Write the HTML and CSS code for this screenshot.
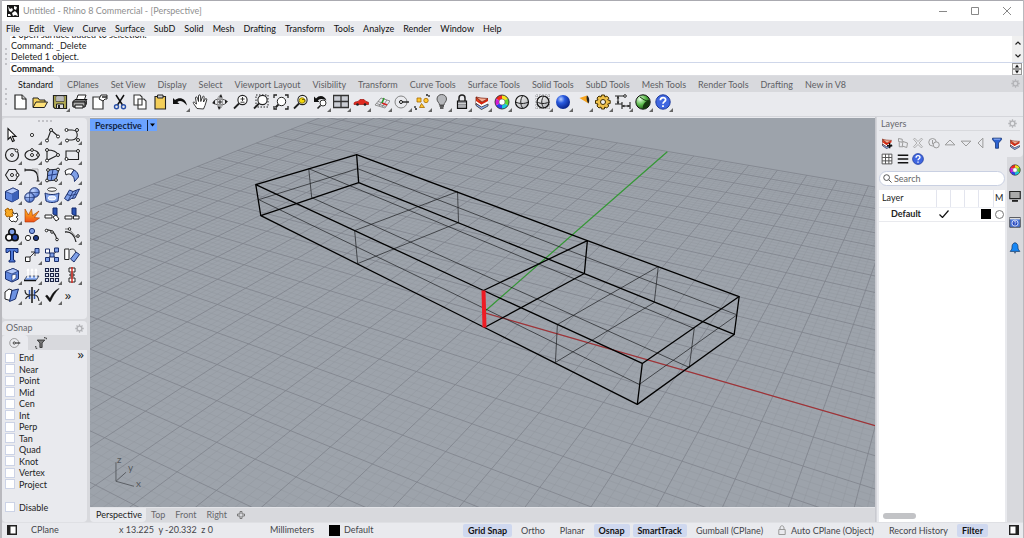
FILE: index.html
```html
<!DOCTYPE html>
<html lang="en">
<head>
<meta charset="utf-8">
<title>Untitled - Rhino 8 Commercial - [Perspective]</title>
<link rel="stylesheet" href="styles.css">
</head>
<body>
<svg class="defs" aria-hidden="true">
  <defs>
    <radialGradient id="blueBall" cx=".35" cy=".3" r=".8"><stop offset="0" stop-color="#b9d0ff"/><stop offset=".35" stop-color="#2a5be0"/><stop offset="1" stop-color="#031a7a"/></radialGradient>
    <radialGradient id="softBall" cx=".35" cy=".3" r=".8"><stop offset="0" stop-color="#c3d6ff"/><stop offset="1" stop-color="#4169c8"/></radialGradient>
    <radialGradient id="greenBall" cx=".3" cy=".3" r=".8"><stop offset="0" stop-color="#e9ffe5"/><stop offset=".5" stop-color="#58b848"/><stop offset="1" stop-color="#0d3c0a"/></radialGradient>
    <linearGradient id="whiteBall" x1="0" x2="1" y1="0" y2="1"><stop offset="0" stop-color="#fff"/><stop offset="1" stop-color="#a9abb0"/></linearGradient>
    <linearGradient id="fire" x1="0" x2="0" y1="0" y2="1"><stop offset="0" stop-color="#ffc21c"/><stop offset="1" stop-color="#f0501a"/></linearGradient>
    <symbol id="gear" viewBox="0 0 10 10"><circle cx="5" cy="5" r="2.6" fill="none" stroke="currentColor" stroke-width="1.5"/><path d="M5 .3v1.9M5 7.8v1.9M.3 5h1.9M7.8 5h1.9M1.7 1.7l1.3 1.3M7 7l1.3 1.3M1.7 8.3L3 7M7 3l1.3-1.3" stroke="currentColor" stroke-width="1.4"/></symbol>
    <symbol id="help" viewBox="0 0 16 16"><circle cx="8" cy="8" r="7.2" fill="#3f66e0" stroke="#1d3a9c"/><path d="M5.400 6.200c0-3.600 5.400-3.400 5.200-.3C10.500 7.600 8 7.700 8 9.800M8 11.200v1.700" fill="none" stroke="#fff" stroke-width="1.800"/></symbol>
    <symbol id="layers" viewBox="0 0 16 16"><path d="M2 3v8l5.500 4V8z" fill="#e8401e" stroke="#5a1408" stroke-width=".7"/><path d="M2 7v2l5.500 4 6.500-3V7.500L7.500 10.500z" fill="#fff"/><path d="M2 9.500v2l5.500 4 6.500-3.500v-2L7.500 13z" fill="#8fb0f5" stroke="#333" stroke-width=".8"/><path d="M2 6.500l5.500 4L14 7V4.500L8 8z" fill="#d8250e"/><path d="M2 3l5 1 7 .5L8 8z" fill="#f9b195" stroke="#7a1a0a" stroke-width=".7"/></symbol>
    <symbol id="wheel" viewBox="0 0 16 16"><g fill="none" stroke-width="4"><path d="M8 3A5 5 0 0 1 12.300 5.500" stroke="#f7e11b"/><path d="M12.300 5.500A5 5 0 0 1 12.300 10.500" stroke="#5fd62e"/><path d="M12.300 10.500A5 5 0 0 1 8 13" stroke="#18c8d8"/><path d="M8 13A5 5 0 0 1 3.700 10.500" stroke="#2b3ef0"/><path d="M3.700 10.500A5 5 0 0 1 3.700 5.500" stroke="#d21bd6"/><path d="M3.700 5.500A5 5 0 0 1 8 3" stroke="#f2261b"/></g><circle cx="8" cy="8" r="7" fill="none" stroke="#333" stroke-width=".9"/><circle cx="8" cy="8" r="3" fill="#fff" stroke="#555" stroke-width=".6"/></symbol>
    <symbol id="snap" viewBox="0 0 16 16"><circle cx="7" cy="8" r="6" fill="none" stroke="#777" stroke-width=".9"/><circle cx="7" cy="8" r="1.500" fill="#fff" stroke="#111"/><path d="M8.500 8H15" stroke="#111" stroke-width="1.300"/></symbol>
    <symbol id="lens" viewBox="0 0 16 16"><circle cx="9.500" cy="6" r="4.600" fill="#fff" stroke="#222" stroke-width="1.100"/><path d="M6 9.500L1 14.500" stroke="#222" stroke-width="1.800"/></symbol>
    <symbol id="page" viewBox="0 0 16 16"><path d="M3 1h7l4 4v10H3z" fill="#fff" stroke="#222" stroke-width="1.200"/><path d="M10 1v4h4" fill="#ccc" stroke="#222"/></symbol>
  </defs>
</svg>

<div class="window">
  <header class="titlebar">
    <svg class="logo" viewBox="0 0 12 12"><rect width="12" height="12" fill="#161616"/><path d="M1 1l2 3 2-1 1 2-2 2-2-1zM7 1l3 1-1 3-2-1zM5 8l3-2 2 2 1 3-3-1-2 1zM1 9l2 0 1 2-3 0z" fill="#fff"/></svg>
    <h1>Untitled - Rhino 8 Commercial - [Perspective]</h1>
    <div class="winbtns">
      <button aria-label="Minimize"><svg viewBox="0 0 8 8"><path d="M0 4.500h8" /></svg></button>
      <button aria-label="Maximize"><svg viewBox="0 0 8 8"><path d="M.5.500h7v7h-7z"/></svg></button>
      <button aria-label="Close"><svg viewBox="0 0 8 8"><path d="M0 0l8 8M8 0L0 8"/></svg></button>
    </div>
  </header>

  <nav class="menu">
    <button>File</button><button>Edit</button><button>View</button><button>Curve</button><button>Surface</button><button>SubD</button><button>Solid</button><button>Mesh</button><button>Drafting</button><button>Transform</button><button>Tools</button><button>Analyze</button><button>Render</button><button>Window</button><button>Help</button>
  </nav>

  <section class="command">
    <div class="grip"><i></i><i></i><i></i><i></i></div>
    <div class="console">
      <div class="history">
        <div class="lines"><p>1 open surface added to selection.</p><p>Command: _Delete</p><p>Deleted 1 object.</p></div>
        <div class="scroll"><svg viewBox="0 0 6 4"><path d="M.5 3.500L3 1l2.500 2.500"/></svg><svg viewBox="0 0 6 4"><path d="M.5.500L3 3 5.500.500"/></svg></div>
      </div>
      <div class="prompt"><label for="cmd">Command:</label><input id="cmd" type="text">
        <div class="spin"><button aria-label="Previous"><svg viewBox="0 0 6 4"><path d="M1 3.500L3 .5l2 3z"/></svg></button><button aria-label="Next"><svg viewBox="0 0 6 4"><path d="M1 .5l2 3 2-3z"/></svg></button></div>
      </div>
    </div>
  </section>

  <section class="ribbon">
    <div class="grip"><i></i><i></i><i></i><i></i></div>
    <div class="ribbon-body">
      <div class="tabs" role="tablist">
        <button class="on">Standard</button><button>CPlanes</button><button>Set View</button><button>Display</button><button>Select</button><button>Viewport Layout</button><button>Visibility</button><button>Transform</button><button>Curve Tools</button><button>Surface Tools</button><button>Solid Tools</button><button>SubD Tools</button><button>Mesh Tools</button><button>Render Tools</button><button>Drafting</button><button>New in V8</button>
        <svg class="gear"><use href="#gear"/></svg>
      </div>
      <div class="tools">
        <button aria-label="New"><svg viewBox="0 0 16 16"><use href="#page"/></svg></button>
        <button aria-label="Open"><svg viewBox="0 0 16 16"><path d="M1 13V4h5l1.500 2H13v3" fill="#f7d560" stroke="#222"/><path d="M1 13.500L4 8h11.500l-3 5.500z" fill="#ffe27a" stroke="#222"/></svg></button>
        <button aria-label="Save" class="fly"><svg viewBox="0 0 16 16"><path d="M1.500 1.500h13v13H3l-1.500-1.500z" fill="#b5ae55" stroke="#222" stroke-width="1.200"/><path d="M4 2h8v5.500H4z" fill="#eee" stroke="#333" stroke-width=".7"/><path d="M5 4h6M5 6h6" stroke="#888"/><path d="M4.500 10h7v4.500h-7z" fill="#ddd" stroke="#222"/><path d="M6 11h2v3H6z" fill="#222"/></svg></button>
        <button aria-label="Print"><svg viewBox="0 0 16 16"><path d="M4 7l2-6h8l-2 6" fill="#fff" stroke="#222"/><path d="M1 7.500l2-2h12l-2 2v5H1z" fill="#777" stroke="#111"/><path d="M1 8h12v5H1z" fill="#aaa" stroke="#111"/><path d="M3 11h8v3H3z" fill="#eee" stroke="#111"/><path d="M13 8l2-2v4l-2 3z" fill="#333"/></svg></button>
        <button aria-label="Document properties"><svg viewBox="0 0 16 16"><path d="M1 3h7l3 3v9H1z" fill="#fff" stroke="#333" stroke-width="1.200"/><path d="M7 5l2-4h6v4h-2l-2 2z" fill="#fff" stroke="#222"/><path d="M10 3h5" stroke="#222" stroke-width="1.500"/></svg></button>
        <button aria-label="Cut"><svg viewBox="0 0 16 16"><path d="M4 1l6.500 10M12 1L5.500 11" stroke="#111" stroke-width="1.500"/><circle cx="4.500" cy="12.800" r="2" fill="none" stroke="#2950a8" stroke-width="1.400"/><circle cx="11.500" cy="12.800" r="2" fill="none" stroke="#2950a8" stroke-width="1.400"/></svg></button>
        <button aria-label="Copy"><svg viewBox="0 0 16 16"><path d="M2 1h6l2 2v8H2zM6 5h6l2 2v8H6z" fill="#fff" stroke="#333" stroke-width="1.100"/></svg></button>
        <button aria-label="Paste"><svg viewBox="0 0 16 16"><path d="M3 2.500h10.500v12.500H3z" fill="#f4cf5a" stroke="#222" stroke-width="1.100"/><path d="M5.500 1h5.500v3H5.500z" fill="#ccc" stroke="#222"/></svg></button>
        <button aria-label="Undo" class="fly"><svg viewBox="0 0 16 16"><path d="M1 4v6h6.500L5.300 8C8 6 11 7 15 11.500 13.500 4.500 8 2.500 3 6z" fill="#111"/></svg></button>
        <button aria-label="Pan"><svg viewBox="0 0 16 16"><path d="M5 14.500L1.500 9.500c-1-2 1-2 2 0L4.500 10 3.500 4c0-1.500 1.500-1.500 2 0L6.500 7.500 6.500 2c0-1.500 2-1.500 2 0l.3 5.500L10.500 3c.4-1.200 2-1 1.700.3L11.500 8l1.700-3c.7-1 2-.4 1.500 1L13 11.500l-1.500 3.500z" fill="#fff" stroke="#222" stroke-width=".9"/></svg></button>
        <button aria-label="Rotate view"><svg viewBox="0 0 16 16"><ellipse cx="8" cy="8" rx="6.500" ry="3" fill="none" stroke="#333" stroke-width=".8"/><ellipse cx="8" cy="8" rx="2.500" ry="6.500" fill="none" stroke="#888" stroke-width=".8"/><path d="M9 0l1.500 3.500H7zM7 16l2-3.500H5.500zM0 9l3-2.500v4zM16 7.500l-3-2v4z" fill="#222"/><path d="M8 6v4M6 8h4" stroke="#222"/></svg></button>
        <button aria-label="Zoom dynamic" class="step"><svg viewBox="0 0 16 16"><use href="#lens"/><path d="M7.500 5h4M9.500 3v4M7.500 8.200h4" stroke="#222" stroke-width=".9"/></svg></button>
        <button aria-label="Zoom window"><svg viewBox="0 0 16 16"><use href="#lens"/><path d="M3 1h12v12H3z" fill="none" stroke="#222" stroke-dasharray="1.500 1.500"/></svg></button>
        <button aria-label="Zoom extents"><svg viewBox="0 0 16 16"><circle cx="8.500" cy="7.500" r="4.200" fill="#fff" stroke="#222"/><path d="M5.500 10.500L2.500 13.500" stroke="#222" stroke-width="1.800"/><path d="M1 4V1h3M12 1h3v3M15 12v3h-3M1 12v3h3" fill="none" stroke="#222" stroke-width="1.300"/></svg></button>
        <button aria-label="Zoom selected"><svg viewBox="0 0 16 16"><use href="#lens"/><circle cx="9" cy="6.500" r="2.800" fill="#f5d90a" stroke="#7c6b00" stroke-width=".8"/><path d="M9 5.500h3v3" fill="none" stroke="#7c6b00"/></svg></button>
        <button aria-label="Undo view" class="fly"><svg viewBox="0 0 16 16"><path d="M1 2.500V8h5.500L4.800 6.200C7.500 4.500 10 4.500 13.500 6.500 11.500 1.500 6.500.5 3 4.500z" fill="#111"/><circle cx="10" cy="9" r="3" fill="#fff" stroke="#333"/><path d="M7.500 11.500l-3 3" stroke="#222" stroke-width="1.600"/></svg></button>
        <button aria-label="Viewports" class="fly"><svg viewBox="0 0 16 16"><path d="M.5 1.500h15v12H.500z" fill="#c9ccd3" stroke="#333" stroke-width="1.300"/><path d="M8 1.500v12M.5 7.500h15" stroke="#333" stroke-width="1.300"/></svg></button>
        <button aria-label="Car view" class="fly"><svg viewBox="0 0 16 16"><path d="M1 9.500c0-1.500 2-1.800 4-2l2-2h4l2 2 2.500.8V10.500H1z" fill="#e02a20" stroke="#a01510" stroke-width=".7"/><circle cx="4.500" cy="10.500" r="1.300" fill="#222"/><circle cx="12" cy="10.500" r="1.300" fill="#222"/></svg></button>
        <button aria-label="Set CPlane" class="fly step"><svg viewBox="0 0 16 16"><path d="M1 11L7 4l9 3-5 7zM4 7.500l9 3M2.500 9.500l9 3M10 5l-5 7M13 6l-5 7" fill="none" stroke="#777" stroke-width=".8"/><path d="M8 9l5 2" stroke="#d22" stroke-width="1.500"/><path d="M8 9l2-5" stroke="#2a9a2a" stroke-width="1.500"/></svg></button>
        <button aria-label="Object snap" class="fly"><svg viewBox="0 0 16 16"><use href="#snap"/></svg></button>
        <button aria-label="Select" class="fly"><svg viewBox="0 0 16 16"><path d="M3 4h4v4H3z" fill="#ffc62e" stroke="#a66a00" stroke-width=".8"/><circle cx="12" cy="6.500" r="2.200" fill="#ffc62e" stroke="#a66a00" stroke-width=".8"/><path d="M7.500 9.500l3 4h-5z" fill="#ffc62e" stroke="#a66a00" stroke-width=".8"/><path d="M12 1h3v3M1 12v3h3" fill="none" stroke="#222" stroke-width="1.300" stroke-dasharray="2 1"/></svg></button>
        <button aria-label="Hide" class="fly"><svg viewBox="0 0 16 16"><path d="M5.500 11C5.500 8.500 3 8 3 5c0-6 9.500-6 9.500 0 0 3-2.500 3.500-2.500 6z" fill="#b5b7bb" stroke="#555"/><path d="M5.500 12h4.500M6 14h3.500" stroke="#333" stroke-width="1.400"/></svg></button>
        <button aria-label="Lock" class="fly"><svg viewBox="0 0 16 16"><path d="M5 7V4c0-4 6-4 6 0v3" fill="none" stroke="#222" stroke-width="1.500"/><path d="M3.500 7h9v7.500h-9z" fill="#8f9196" stroke="#111" stroke-width="1.200"/><path d="M4 9.500h8M4 12h8" stroke="#ddd" stroke-width=".8"/></svg></button>
        <button aria-label="Layers" class="fly"><svg viewBox="0 0 16 16"><use href="#layers"/></svg></button>
        <button aria-label="Color" class="fly"><svg viewBox="0 0 16 16"><use href="#wheel"/></svg></button>
        <button aria-label="Shade"><svg viewBox="0 0 16 16"><circle cx="8" cy="8" r="6.500" fill="url(#whiteBall)" stroke="#111" stroke-width="1.200"/><path d="M9 1.500C6 5 6 11 9 14.500M1.500 8c4 2 9 2 13 0" fill="none" stroke="#222"/></svg></button>
        <button aria-label="Shade options" class="fly step"><svg viewBox="0 0 16 16"><path d="M2 0v16M5 0v16M8 0v16M11 0v16M14 0v16M0 2h16M0 5h16M0 8h16M0 11h16M0 14h16" stroke="#777" stroke-width=".7" stroke-dasharray="1 1"/><circle cx="8" cy="8" r="6" fill="url(#whiteBall)" stroke="#111" stroke-width="1.200"/><path d="M9 2C6 5 6 11 9 14M2 8c4 2 8 2 12 0" fill="none" stroke="#222"/></svg></button>
        <button aria-label="Render" class="fly"><svg viewBox="0 0 16 16"><circle cx="8" cy="8" r="7" fill="url(#blueBall)"/></svg></button>
        <button aria-label="Spotlight" class="fly"><svg viewBox="0 0 16 16"><path d="M4.500 4L12 1.500l1.500 8z" fill="#f7a520"/><path d="M12 1.500c2 1 3 5 1.500 8C12 8 11 4 12 1.500z" fill="#222"/></svg></button>
        <button aria-label="Options" class="fly"><svg viewBox="0 0 16 16"><path d="M6.500 1h3l.4 2 2-.9 2 2-1.200 1.800 2.500.6v3l-2.500.5 1 2-2 2-2-1-.3 2h-3L6 13l-2 1-2-2 1-2-2.500-.5v-3L3 6 2 4l2-2 2 1z" fill="#eec04a" stroke="#3f2d00"/><circle cx="8" cy="8" r="2.500" fill="#eee" stroke="#3f2d00"/></svg></button>
        <button aria-label="Dimensions" class="fly"><svg viewBox="0 0 16 16"><path d="M0 2h9M3 2v8M0 10h7M7 8v7M7 12h8M15 8v7" fill="none" stroke="#222" stroke-width="1.100"/><path d="M3 2l-1.300 2.500h2.600zM3 10L1.700 7.500h2.600zM7 12l2.500-1.300v2.600zM15 12l-2.500-1.300v2.600z" fill="#222"/><circle cx="10" cy="2" r="1.300" fill="#fff" stroke="#222"/></svg></button>
        <button aria-label="Grasshopper" class="fly"><svg viewBox="0 0 16 16"><circle cx="8" cy="8" r="7.200" fill="url(#greenBall)" stroke="#111"/><path d="M8 15c-1-4 2-8 6.500-9 1 4-2 9-6.500 9z" fill="#16380f"/><path d="M5 3c3 2 5 4 9 4" fill="none" stroke="#16380f"/></svg></button>
        <button aria-label="Help" class="fly"><svg viewBox="0 0 16 16"><use href="#help"/></svg></button>
      </div>
    </div>
  </section>

  <main class="work">
    <aside class="left">
      <section class="palette">
        <div class="dots"><i></i><i></i><i></i><i></i></div>
        <div class="grid">
          <button aria-label="Pointer"><svg viewBox="0 0 16 16"><path d="M4 1.500v11l2.500-2.500 2 4.500 1.800-.8-2-4.300H12z" fill="#fff" stroke="#111" stroke-width="1.100"/></svg></button>
          <button aria-label="Point" class="fly"><svg viewBox="0 0 16 16"><circle cx="8" cy="8" r="1.600" fill="#fff" stroke="#333"/></svg></button>
          <button aria-label="Polyline" class="fly"><svg viewBox="0 0 16 16"><path d="M3 14L7 3l8 7" fill="none" stroke="#222" stroke-width="1.100"/><g fill="#fff" stroke="#222"><circle cx="3" cy="13.500" r="1.500"/><circle cx="7" cy="3" r="1.500"/><circle cx="14" cy="9.500" r="1.500"/></g></svg></button>
          <button aria-label="Curve" class="fly"><svg viewBox="0 0 16 16"><path d="M2 3h6c7 0 7 10 0 10H3" fill="none" stroke="#222" stroke-width="1.100"/><g fill="#fff" stroke="#222"><circle cx="2.500" cy="3" r="1.500"/><circle cx="13" cy="3" r="1.500"/><circle cx="14" cy="13" r="1.500"/><circle cx="3" cy="13.500" r="1.500"/></g></svg></button>
          <button aria-label="Circle" class="fly"><svg viewBox="0 0 16 16"><circle cx="8" cy="8" r="6.500" fill="none" stroke="#222" stroke-width="1.200"/><circle cx="8" cy="8" r="1.400" fill="#fff" stroke="#222"/><circle cx="12.500" cy="3.500" r="1.400" fill="#fff" stroke="#222"/></svg></button>
          <button aria-label="Ellipse" class="fly"><svg viewBox="0 0 16 16"><ellipse cx="8" cy="8" rx="7" ry="5" fill="none" stroke="#222" stroke-width="1.200"/><g fill="#fff" stroke="#222"><circle cx="8" cy="8" r="1.500"/><circle cx="8" cy="3" r="1.400"/><circle cx="14" cy="8" r="1.400"/></g></svg></button>
          <button aria-label="Arc" class="fly"><svg viewBox="0 0 16 16"><path d="M3 3c6 0 10 2 11 5L3 13.500z" fill="none" stroke="#222" stroke-width="1.100"/><g fill="#fff" stroke="#222"><circle cx="3" cy="3" r="1.500"/><circle cx="14" cy="8" r="1.500"/><circle cx="3" cy="13.500" r="1.500"/></g></svg></button>
          <button aria-label="Rectangle" class="fly"><svg viewBox="0 0 16 16"><path d="M2 4h12.500v8.500H2z" fill="none" stroke="#222" stroke-width="1.100"/><g fill="#fff" stroke="#222"><circle cx="14" cy="4" r="1.500"/><circle cx="2.500" cy="12" r="1.500"/></g></svg></button>
          <button aria-label="Polygon" class="fly"><svg viewBox="0 0 16 16"><path d="M1.500 8L5 2.500h6.500L14.500 8l-3 5.500H5z" fill="none" stroke="#222" stroke-width="1.100"/><g fill="#fff" stroke="#222"><circle cx="8" cy="8" r="1.500"/><circle cx="13.500" cy="8" r="1.500"/></g></svg></button>
          <button aria-label="Fillet" class="fly"><svg viewBox="0 0 16 16"><path d="M1 3h5c6 0 8 3 8 11" fill="none" stroke="#222" stroke-width="1.300"/><path d="M8 2h6v7" fill="none" stroke="#999" stroke-width=".8"/><path d="M1 1.500v3M12.500 14h3" stroke="#222"/></svg></button>
          <button aria-label="Surface" class="fly"><svg viewBox="0 0 16 16"><path d="M4 3l11-1-3 11-9 1z" fill="#7fa0e8" stroke="#222"/><path d="M9 2.500L7 14M3.500 8.500L13.500 7" stroke="#223a80"/><g fill="#fff" stroke="#222"><circle cx="4" cy="3" r="1.400"/><circle cx="14" cy="2.500" r="1.400"/><circle cx="12" cy="13" r="1.400"/><circle cx="3" cy="13.500" r="1.400"/></g></svg></button>
          <button aria-label="Sweep" class="fly"><svg viewBox="0 0 16 16"><path d="M1 4c3-2.500 6-3 9-1L7 7.500C5 6.500 3.500 7 2 8z" fill="#fff" stroke="#222"/><path d="M10 3c3 1.500 4.500 4 4.500 7l-4 4.500C10.500 11 9.500 9 7 7.500z" fill="#7fa0e8" stroke="#1b2f6c"/></svg></button>
          <button aria-label="Box" class="fly"><svg viewBox="0 0 16 16"><path d="M1.500 4.500L9 1l5.500 2.500v8L8 15l-6.500-3z" fill="#5e85dd" stroke="#1b2f6c"/><path d="M1.500 4.500L9 1l5.500 2.500L8 7z" fill="#b4c9fa" stroke="#1b2f6c" stroke-width=".7"/><path d="M8 7v8l6.500-3.500v-8z" fill="#3b60b8"/></svg></button>
          <button aria-label="Sphere" class="fly"><svg viewBox="0 0 16 16"><circle cx="10.500" cy="5.500" r="4.800" fill="url(#softBall)" stroke="#1b2f6c"/><circle cx="5.500" cy="10.500" r="4.800" fill="url(#softBall)" stroke="#1b2f6c"/><path d="M1 10.500h9M5.500 6v9M7 5.500h8" stroke="#1b2f6c" stroke-width=".6"/></svg></button>
          <button aria-label="Revolve" class="fly"><svg viewBox="0 0 16 16"><ellipse cx="8" cy="2.500" rx="4.500" ry="1.800" fill="#fff" stroke="#333"/><path d="M1 6c4 2 10 2 14 0l-1 8c-4 2-8 2-12 0z" fill="#7fa0e8" stroke="#1b2f6c"/><ellipse cx="8" cy="11" rx="4" ry="2" fill="#dfe8ff" stroke="#fff"/></svg></button>
          <button aria-label="Extrude" class="fly"><svg viewBox="0 0 16 16"><path d="M.5 11.500L5.500 3l3.500 1.500L15.500 2 11 11l-3.500.5L4 14z" fill="#7fa0e8" stroke="#1b2f6c"/><path d="M3 7.500l3.500 1 6.500-1.500M9 4.500L4.500 13M12.500 3.700L8 12" fill="none" stroke="#1b2f6c" stroke-width=".8"/></svg></button>
          <button aria-label="Puzzle" class="fly"><svg viewBox="0 0 16 16"><path d="M6 6l3-1 1 2 3-1 1 3-2 1 2 2-2 3-3-1-1 1-3-3 1-2z" fill="#fff" stroke="#333"/><path d="M1 3l3-2 1 2 3-1 1 3-1 1 1 3-3 1-1-1-2 1-2-3 1-1z" fill="#f7a823" stroke="#a85f00"/></svg></button>
          <button aria-label="Explode"><svg viewBox="0 0 16 16"><path d="M1 15V2l3.500 6L7.500 2l1 6.500L15 4l-4.500 6.500 5 .5L10 15z" fill="url(#fire)" stroke="#a33204" stroke-width=".6"/></svg></button>
          <button aria-label="Trim"><svg viewBox="0 0 16 16"><path d="M9 1h4v8l-4-2z" fill="#2b55b5" stroke="#14296b"/><path d="M1 8h7v3H1zM9 10l3-2 3 4-3 2z" fill="#fff" stroke="#222"/></svg></button>
          <button aria-label="Split"><svg viewBox="0 0 16 16"><path d="M8 1h4v8l-4-2z" fill="#2b55b5" stroke="#14296b"/><path d="M1 9h7v3H1zM9.500 9H15v3H9.500z" fill="#fff" stroke="#222"/></svg></button>
          <button aria-label="Group" class="fly"><svg viewBox="0 0 16 16"><g stroke="#111" stroke-width="1.600"><circle cx="8" cy="5" r="3.200" fill="#7fa0e8"/><circle cx="5" cy="10.500" r="3.200" fill="#fff"/><circle cx="11" cy="10.500" r="3.200" fill="#2446a8"/></g></svg></button>
          <button aria-label="Ungroup"><svg viewBox="0 0 16 16"><circle cx="8" cy="4" r="2.600" fill="#7fa0e8" stroke="#1b2f6c"/><circle cx="4" cy="11" r="2.600" fill="#fff" stroke="#222"/><circle cx="12" cy="11" r="2.600" fill="#1f3a86" stroke="#111"/></svg></button>
          <button aria-label="Join"><svg viewBox="0 0 16 16"><path d="M2 3c6-1 10 4 11 10" fill="none" stroke="#222" stroke-width="1.300"/><g fill="#fff" stroke="#222"><circle cx="2.500" cy="3.500" r="1.300"/><circle cx="8" cy="5" r="1.300"/><circle cx="13" cy="12.500" r="1.300"/></g></svg></button>
          <button aria-label="Edit points" class="fly"><svg viewBox="0 0 16 16"><path d="M1 5c6-1 10 4 11 10" fill="none" stroke="#222" stroke-width="1.300"/><path d="M1 2h5M5 2l7 8M12 10l3 0" stroke="#777"/><g fill="#fff" stroke="#222"><circle cx="5.500" cy="2" r="1.300"/><circle cx="14" cy="9" r="1.300"/></g></svg></button>
          <button aria-label="Text"><svg viewBox="0 0 16 16"><path d="M2 1.500h12v4h-2L11 4H9.500v9l1.500.500V15H5v-1.500l1.500-.5V4H5L4 5.500H2z" fill="#4d78d8" stroke="#14296b"/></svg></button>
          <button aria-label="Move" class="fly"><svg viewBox="0 0 16 16"><path d="M5 11l6-6M7 5h4v4" fill="none" stroke="#222" stroke-width=".9"/><path d="M1.500 10h4.500v4.500H1.500z" fill="#fff" stroke="#222"/><path d="M11 1.500h4V6h-4z" fill="#7fa0e8" stroke="#1b2f6c"/></svg></button>
          <button aria-label="Copy objects"><svg viewBox="0 0 16 16"><path d="M3 4l10 8M13 4L3 12" stroke="#222"/><g fill="#7fa0e8" stroke="#1b2f6c"><path d="M1.500 2h4v4h-4z" fill="#fff"/><path d="M10.500 1h4v4h-4zM6 6h4v4H6zM10.500 10.500h4v4h-4zM1.500 10.500h4v4h-4z"/></g></svg></button>
          <button aria-label="Rotate"><svg viewBox="0 0 16 16"><path d="M.7 2H5v10.500H.700z" fill="#fff" stroke="#222"/><path d="M6 2.500c4-1 5 0 5.500 2.500" fill="none" stroke="#333"/><path d="M12 5l3.500 2.500-5.500 7.500L6.500 12z" fill="#7fa0e8" stroke="#1b2f6c"/></svg></button>
          <button aria-label="Boolean" class="fly"><svg viewBox="0 0 16 16"><path d="M1.500 4.500L9 1.500l5.500 2.500v8L8 15l-6.500-3z" fill="#5e85dd" stroke="#1b2f6c"/><path d="M1.500 4.500L9 1.500l5.500 2.500L8 7z" fill="#b4c9fa" stroke="#1b2f6c" stroke-width=".7"/><path d="M8 8l4-1v4l-4 3z" fill="#fff" stroke="#1b2f6c" stroke-width=".7"/></svg></button>
          <button aria-label="Project" class="fly"><svg viewBox="0 0 16 16"><path d="M3 9h12l-3 4.500H0z" fill="#8badf2" stroke="#333" stroke-width=".7"/><path d="M0 13.500h12" stroke="#111" stroke-width="1.500"/><path d="M4 11V2M8 11V2M12 11V2" stroke="#fff" stroke-width="1.500"/><path d="M2.500 4L4 1l1.500 3zM6.500 4L8 1l1.500 3zM10.500 4L12 1l1.500 3z" fill="#fff"/></svg></button>
          <button aria-label="Array" class="fly"><svg viewBox="0 0 16 16"><path d="M1.500 1.500h3v3h-3zM6.500 1.500h3v3h-3zM11.500 1.500h3v3h-3zM1.500 6.500h3v3h-3zM6.500 6.500h3v3h-3zM11.500 6.500h3v3h-3zM1.500 11.500h3v3h-3zM6.500 11.500h3v3h-3zM11.500 11.500h3v3h-3z" fill="#dfe6fa" stroke="#1b2444" stroke-width="1.100"/></svg></button>
          <button aria-label="Align" class="fly"><svg viewBox="0 0 16 16"><path d="M5 1h6v4H5zM6 7h4v2H6zM5 11h6v4H5z" fill="#fff" stroke="#222"/><path d="M8 0v16" stroke="#d8261c" stroke-width="1.400"/></svg></button>
          <button aria-label="Shear" class="fly"><svg viewBox="0 0 16 16"><path d="M1 5L5 2l3 1-2 10.500L1 12z" fill="#fff" stroke="#222"/><path d="M8 3.500L14.500 2 11.500 12l-6 2.500z" fill="#6d92e2" stroke="#1b2f6c"/></svg></button>
          <button aria-label="Analyze" class="fly"><svg viewBox="0 0 16 16"><path d="M8 0v16" stroke="#111" stroke-width="1.500"/><path d="M5.500 3v9M10.500 3v9" stroke="#2b55b5" stroke-width="1.500"/><path d="M1 3c0 4 2 5 4.500 5h5c3 0 4 3 4.500 6M1.500 12c1-2 2-3 4-3M11 6c2-1 3-2 4-4" fill="none" stroke="#222" stroke-width="1.100"/></svg></button>
          <button aria-label="Check" class="fly"><svg viewBox="0 0 16 16"><path d="M1.500 9l1.500-1L6 11.500c2-4.500 4-7.500 9-10C11 5.500 9 9 6.500 14.500H5.500z" fill="#111" stroke="#111" stroke-width=".5"/></svg></button>
          <button class="more">»</button>
        </div>
      </section>
      <section class="osnap">
        <h2>OSnap <svg class="gear"><use href="#gear"/></svg></h2>
        <div class="otabs"><button class="on" aria-label="Snaps"><svg viewBox="0 0 16 16"><use href="#snap"/></svg></button><button aria-label="Filter"><svg viewBox="0 0 16 16"><path d="M3 4h10L9.500 8v6h-3V8z" fill="#777" stroke="#222"/><path d="M12 1h3v3M1 12v3h3" fill="none" stroke="#222" stroke-width="1.300" stroke-dasharray="2 1"/></svg></button></div>
        <div class="checks">
          <button class="more">»</button>
          <label><input type="checkbox">End</label><label><input type="checkbox">Near</label><label><input type="checkbox">Point</label><label><input type="checkbox">Mid</label><label><input type="checkbox">Cen</label><label><input type="checkbox">Int</label><label><input type="checkbox">Perp</label><label><input type="checkbox">Tan</label><label><input type="checkbox">Quad</label><label><input type="checkbox">Knot</label><label><input type="checkbox">Vertex</label><label><input type="checkbox">Project</label>
          <label class="apart"><input type="checkbox">Disable</label>
        </div>
      </section>
    </aside>

    <section class="center">
      <div class="viewport">
        <svg class="scene" viewBox="90 118 786 390" preserveAspectRatio="xMidYMid slice" role="img" aria-label="Wireframe of two joined boxes">
          <g id="minor"></g><g id="major"></g>
          <path d="M484 313L668 152" stroke="#359a35" stroke-width="1.200"/>
          <path d="M484 313L910 436" stroke="#a13236" stroke-width="1.200"/>
          <g class="thin">
            <path d="M309 169L695 329M312 198L690 368M309 169L312 198M695 329L690 368"/>
            <path d="M259 200L485 309 640 385 737 316M259 200L358 169 588 258 737 315"/>
            <path d="M458 192L355 231 358 264 459 223zM659 267L558 325 556 363 655 303z"/>
          </g>
          <g class="thick">
            <path d="M357 155L256 185 484 291 643 364 740 297 588 241z"/>
            <path d="M359 183L261 216 485 328 638 405 735 335 585 274z"/>
            <path d="M357 155L359 183M256 185L261 216M643 364L638 405M740 297L735 335M484 291L588 241 585 274 485 328"/>
          </g>
          <path d="M484 291L485 328" stroke="#ee1c24" stroke-width="4"/>
          <g class="axes"><path d="M116 463V482L126 473M116 482L134 487"/><text x="117" y="464">z</text><text x="128" y="472">y</text><text x="136" y="488">x</text></g>
        </svg>
        <button class="vlabel"><span>Perspective</span><svg viewBox="0 0 6 4"><path d="M.5.500h5L3 3.500z"/></svg></button>
      </div>
      <div class="vtabs"><button class="on">Perspective</button><button>Top</button><button>Front</button><button>Right</button><button aria-label="Add viewport"><svg viewBox="0 0 8 8"><path d="M3 .5h2V3h2.500v2H5v2.500H3V5H.5V3H3z"/></svg></button></div>
    </section>

    <aside class="panel">
      <h2>Layers <svg class="gear"><use href="#gear"/></svg></h2>
      <div class="ptools">
        <button aria-label="New layer"><svg viewBox="0 0 16 16"><use href="#layers"/><path d="M11.500 8v7M8 11.500h7" stroke="#111" stroke-width="2"/></svg></button>
        <button aria-label="New sublayer"><svg viewBox="0 0 16 16"><path d="M2 2l5 1v4L2 6zM3 7v6h5M8 6l6 2-1 6-6-2z" fill="none" stroke="#999" stroke-width="1.300"/></svg></button>
        <button aria-label="Delete"><svg viewBox="0 0 16 16"><path d="M2 3l1.500-1.500L8 6l4.500-4.500L14 3 9.500 8l4.500 5-1.500 1.500L8 10l-4.500 4.500L2 13l4.500-5z" fill="none" stroke="#999"/></svg></button>
        <button aria-label="Duplicate"><svg viewBox="0 0 16 16"><circle cx="6" cy="7" r="5" fill="none" stroke="#999" stroke-width="1.300"/><path d="M6 4v5h5" fill="none" stroke="#999" stroke-width="1.300"/><circle cx="11" cy="10.500" r="4" fill="#e9eaee" stroke="#999" stroke-width="1.300"/></svg></button>
        <button aria-label="Up"><svg viewBox="0 0 16 16"><path d="M8 4l6.500 6.500h-13z" fill="none" stroke="#999" stroke-width="1.300"/></svg></button>
        <button aria-label="Down"><svg viewBox="0 0 16 16"><path d="M8 12L1.500 5.500h13z" fill="none" stroke="#999" stroke-width="1.300"/></svg></button>
        <button aria-label="Left"><svg viewBox="0 0 16 16"><path d="M4 8l6.500-6.500v13z" fill="none" stroke="#999" stroke-width="1.300"/></svg></button>
        <button aria-label="Filter"><svg viewBox="0 0 16 16"><path d="M2 1.500h12v2L10 8v7H6V8L2 3.500z" fill="#2d62d0" stroke="#12306f"/><path d="M4 3h8" stroke="#a9c4ff"/></svg></button>
        <button aria-label="Columns"><svg viewBox="0 0 16 16"><path d="M1.500 1.500h13v13h-13zM1.500 6h13M1.500 10.500h13M6 1.500v13M10.500 1.500v13" fill="#fff" stroke="#555" stroke-width="1.300"/></svg></button>
        <button aria-label="Menu"><svg viewBox="0 0 16 16"><path d="M1 3h14M1 8h14M1 13h14" stroke="#111" stroke-width="2.200"/></svg></button>
        <button aria-label="Help"><svg viewBox="0 0 16 16"><use href="#help"/></svg></button>
      </div>
      <div class="search"><svg viewBox="0 0 10 10"><circle cx="4" cy="4" r="3.200"/><path d="M6.500 6.500L9.500 9.500"/></svg><input type="text" placeholder="Search" aria-label="Search layers"></div>
      <div class="list">
        <table>
          <thead><tr><th class="name">Layer</th><th></th><th></th><th></th><th></th><th class="mat">M</th></tr></thead>
          <tbody><tr><td class="name">Default</td><td><svg class="tick" viewBox="0 0 10 8"><path d="M.5 4.500l3 3 6-7"/></svg></td><td></td><td></td><td><span class="swatch"></span></td><td class="mat"><span class="ring"></span></td></tr></tbody>
        </table>
        <span class="hbar"></span>
      </div>
    </aside>
    <nav class="rail">
      <button class="on" aria-label="Layers"><svg viewBox="0 0 16 16"><use href="#layers"/></svg></button>
      <button aria-label="Properties"><svg viewBox="0 0 16 16"><use href="#wheel"/></svg></button>
      <button aria-label="Display"><svg viewBox="0 0 16 16"><path d="M1 2h14v9.500H1z" fill="#aaa" stroke="#222" stroke-width="1.500"/><path d="M4 14.500h8" stroke="#222" stroke-width="2.500"/></svg></button>
      <button aria-label="Help panel"><svg viewBox="0 0 16 16"><path d="M1 2h14v13H1z" fill="#4c78dc" stroke="#444" stroke-width="1.200"/><path d="M1 3.500h14" stroke="#ddd" stroke-width="2"/><circle cx="8" cy="9.500" r="4" fill="#2446c0" stroke="#fff"/><path d="M6.800 8.500c0-1.800 2.400-1.600 2.400 0 0 .8-1.200.8-1.200 2M8 11.300v1" stroke="#fff" fill="none"/></svg></button>
      <button aria-label="Notifications"><svg viewBox="0 0 16 16"><path d="M8 1C4 2 4 5 4 8c0 2-1.500 3-2.500 4.500h13C13.500 11 12 10 12 8c0-3 0-6-4-7z" fill="#1787f5" stroke="#173a66"/><path d="M6.500 13.500h3l-1.500 2z" fill="#173a66"/></svg></button>
    </nav>
  </main>

  <footer class="status">
    <button class="side" aria-label="Toggle left"><svg viewBox="0 0 10 10"><path d="M.7.700h8.600v8.600H.700z"/><path d="M1 1h2.500v8H1z" class="fill"/></svg></button>
    <button class="cplane">CPlane</button>
    <span class="coords">x 13.225&nbsp; y -20.332&nbsp; z 0</span>
    <button class="units">Millimeters</button>
    <button class="layer"><span class="swatch"></span>Default</button>
    <div class="modes">
      <button class="on">Grid Snap</button><button>Ortho</button><button>Planar</button><button class="on">Osnap</button><button class="on">SmartTrack</button><button>Gumball (CPlane)</button>
      <button class="auto"><svg viewBox="0 0 8 10"><path d="M2 4.500V3c0-3 4-3 4 0v1.500M.8 4.500h6.400v5H.8z"/></svg>Auto CPlane (Object)</button><button>Record History</button><button class="on">Filter</button>
      <button class="side" aria-label="Toggle right"><svg viewBox="0 0 10 10"><path d="M.7.700h8.600v8.600H.700z"/><path d="M6.500 1H9v8H6.500z" class="fill"/></svg></button>
    </div>
  </footer>
</div>
<script src="grid.js"></script>
</body>
</html>
```

FILE: styles.css
```css
* { box-sizing: border-box; }
body { margin: 0; font: 9px/12px Lato, "Open Sans", sans-serif; color: #222; background: #b9b9be; }
button { font: inherit; color: inherit; background: none; border: 0; padding: 0; margin: 0; white-space: nowrap; }
h1, h2, p { margin: 0; font-size: inherit; font-weight: normal; }
svg { display: block; flex: none; }
.defs { position: absolute; width: 0; height: 0; }
.window { height: 100vh; margin: 0 1px 0 2px; border-top: 1px solid #aaaab0; background: #e9eaee; display: flex; flex-direction: column; }

.titlebar { height: 20px; background: #fff; display: flex; align-items: center; gap: 4px; padding-left: 5px; color: #8f8f8f; }
.logo { width: 12px; height: 12px; }
.winbtns { margin-left: auto; display: flex; gap: 24px; padding-right: 12px; }
.winbtns svg { width: 8px; height: 8px; fill: none; stroke: #888; stroke-width: 1; }

.menu { height: 15px; display: flex; align-items: center; gap: 9px; padding-left: 4px; color: #111; line-height: 10px; }
.grip { width: 8px; flex: none; display: flex; flex-direction: column; align-items: center; justify-content: center; gap: 3px; }
.grip i, .dots i { width: 2px; height: 2px; border-radius: 1px; background: #b4b5ba; }

.command { display: flex; height: 40px; }
.console { flex: 1; display: flex; flex-direction: column; border-bottom: 1px solid #dcdde2; }
.history { height: 26px; background: #fff; display: flex; overflow: hidden; align-items: flex-end; }
.lines { flex: 1; line-height: 11px; padding-left: 1px; }
.scroll { width: 11px; height: 26px; background: #f0f0f0; display: flex; flex-direction: column; justify-content: space-between; align-items: center; padding: 5px 0 4px; }
.scroll svg { width: 6px; height: 4px; fill: none; stroke: #222; stroke-width: 1.2; }
.prompt { flex: 1; background: #fff; border-top: 1px solid #cfd7ea; display: flex; align-items: center; font-weight: bold; padding-left: 1px; }
.prompt input { flex: 1; border: 0; background: none; height: 10px; padding: 0; font: inherit; outline: 0; }
.spin { width: 11px; display: flex; flex-direction: column; }
.spin button { border: 1px solid #999; background: #f4f4f4; width: 10px; height: 6px; display: grid; place-items: center; }
.spin svg { width: 6px; height: 4px; fill: #111; }

.ribbon { display: flex; height: 40px; }
.ribbon-body { flex: 1; min-width: 0; }
.tabs { height: 16px; background: #d8d9dd; display: flex; align-items: stretch; color: #5e5f64; border-radius: 4px 0 0 0; }
.tabs button { padding: 2px 5px 0 7px; }
.tabs .on { background: #e9eaee; color: #111; padding: 2px 7px 0 8px; border-radius: 4px 4px 0 0; }
.gear { width: 9px; height: 9px; color: #b3b4b8; }
.tabs .gear { margin: 3px 3px 0 auto; }
.tools { display: flex; }
.tools button, .grid button { width: 20px; height: 20px; display: grid; place-items: center; position: relative; }
.tools .step { margin-left: 1px; }
.tools svg, .grid svg { width: 16px; height: 16px; }
.fly::after { content: ""; position: absolute; right: 0; bottom: 0; border: 2px solid transparent; border-right-color: #666; border-bottom-color: #666; }

.work { flex: 1; min-height: 0; display: flex; border-top: 1px solid #d5d6db; }
.left { width: 88px; flex: none; display: flex; flex-direction: column; gap: 2px; padding: 1px 3px 0 0; background: #d8d9dd; }
.left section { background: #e9eaee; border-radius: 4px; }
.dots { display: flex; justify-content: center; gap: 2px; padding: 2px 0 3px; }
.grid { display: grid; grid-template-columns: repeat(4, 20px); padding: 0 0 14px; }
.more { font: 13px/12px "Open Sans", sans-serif; }
.grid .more { width: 12px; }
.osnap { flex: 1; }
.osnap h2, .panel h2 { display: flex; justify-content: space-between; align-items: center; height: 14px; padding: 0 3px 0 4px; color: #66676c; }
.otabs { display: flex; background: #d8d9dd; height: 15px; }
.otabs button { width: 26px; display: grid; place-items: center; }
.otabs svg { width: 12px; height: 12px; }
.otabs .on { background: #e9eaee; border-radius: 4px 4px 0 0; }
.checks { position: relative; display: grid; grid-auto-rows: 11px 12px; padding: 2px 0 0 3px; }
.checks label { display: flex; align-items: center; gap: 4px; line-height: 11px; }
.checks input { appearance: none; width: 10px; height: 10px; margin: 0; border: 1px solid #ccd3e6; background: #fff; }
.checks .more { position: absolute; right: 3px; top: 0; line-height: 8px; }
.checks .apart { grid-row: 14; }

.center { flex: 1; min-width: 0; display: flex; flex-direction: column; border-right: 1px solid #c9cad0; }
.viewport { flex: 1; min-height: 0; position: relative; margin-top: 1px; background: #9da3ab; }
.scene { width: 100%; height: 100%; }
#minor { stroke: #8f959d; stroke-width: 0.4; }
#major { stroke: #7f838c; stroke-width: 0.8; }
.thin { fill: none; stroke: #1c1d1f; stroke-width: 0.7; }
.thick { fill: none; stroke: #000; stroke-width: 1.3; stroke-linejoin: round; }
.axes { fill: none; stroke: #55585d; stroke-width: 0.9; }
.axes text { font-size: 10px; fill: #55585d; stroke: none; }
.vlabel { position: absolute; left: 0; top: 1px; height: 12px; background: #6ba3ff; display: flex; align-items: center; padding: 0 1px 0 5px; font-weight: bold; color: #13233f; }
.vlabel span { padding-right: 5px; border-right: 1px solid #13233f; line-height: 11px; }
.vlabel svg { width: 7px; height: 4px; margin-left: 1px; }
.vtabs { height: 15px; flex: none; background: #d8d9dd; display: flex; color: #66676c; border-top: 1px solid #e3e4e8; }
.vtabs button { padding: 0 5px; }
.vtabs .on { background: #e9eaee; color: #222; padding: 0 4px 0 6px; border-radius: 0 0 4px 4px; }
.vtabs svg { width: 8px; height: 8px; fill: none; stroke: #777; }

.panel { width: 131px; flex: none; padding: 0 2px; display: flex; flex-direction: column; border-left: 1px solid #d5d6db; }
.panel h2 { border-bottom: 1px solid #d8d9dd; height: 14px; padding-left: 2px; margin-right: -15px; }
.ptools { display: grid; grid-template-columns: repeat(8, 1fr); row-gap: 4px; padding: 6px 0; }
.ptools button { display: grid; place-items: center; height: 12px; }
.ptools svg { width: 12px; height: 12px; }
.search { display: flex; align-items: center; gap: 2px; height: 15px; background: #fff; border: 1px solid #c9d0e2; border-radius: 8px; padding: 0 3px; }
.search svg { width: 9px; height: 9px; fill: none; stroke: #444; }
.search input { flex: 1; min-width: 0; border: 0; background: none; font: inherit; padding: 0; outline: 0; }
.search input::placeholder { color: #666; opacity: 1; }
.list { flex: 1; margin-top: 4px; background: #fff; display: flex; flex-direction: column; justify-content: space-between; overflow: hidden; }
table { border-collapse: collapse; table-layout: fixed; width: 100%; }
th, td { padding: 0; font-weight: normal; height: 17px; border-right: 1px solid #e3e5ee; }
th { border-bottom: 1px solid #eef0f5; }
td { border-color: transparent; height: 14px; border-bottom: 1px solid #e9eaee; font-weight: bold; }
.name { width: 57px; text-align: left; padding-left: 3px; }
td.name { padding-left: 12px; }
.mat { width: 12px; border-right: 0; }
.tick { width: 10px; height: 8px; fill: none; stroke: #111; stroke-width: 1.2; margin-left: 2px; }
.swatch { display: block; width: 11px; height: 11px; background: #000; }
td .swatch { width: 10px; height: 10px; margin-left: 2px; }
.ring { display: block; width: 9px; height: 9px; border: 1px solid #777; border-radius: 50%; margin-left: 1px; }
.hbar { width: 33px; height: 6px; border-radius: 3px; background: #c2c3c6; margin: 0 0 3px 4px; }

.rail { width: 16px; flex: none; background: #d8d9dd; margin-top: 14px; display: flex; flex-direction: column; }
.rail button { height: 26px; display: grid; place-items: center; }
.rail .on { background: #e9eaee; border-radius: 0 0 4px 0; }
.rail svg { width: 12px; height: 12px; }

.status { height: 16px; flex: none; display: flex; align-items: center; border-top: 1px solid #dfe0e4; padding-bottom: 1px; color: #44454a; }
.side svg { width: 10px; height: 10px; fill: #fff; stroke: #222; stroke-width: 1.4; }
.side .fill { fill: #222; stroke: none; }
.status > .side { margin-left: 5px; }
.cplane { margin-left: 14px; width: 88px; text-align: left; }
.coords { width: 151px; }
.units { width: 59px; text-align: left; }
.layer { display: flex; align-items: center; gap: 4px; }
.modes { margin-left: auto; display: flex; align-items: center; gap: 3px; padding-right: 4px; }
.modes button { padding: 0 6px; height: 13px; line-height: 13px; }
.modes .on { padding: 0 5px; background: #cfd8ef; color: #111; font-weight: bold; border-radius: 2px; }
.modes .side { display: grid; place-items: center; padding: 0 0 0 18px; }
.auto { display: flex; align-items: center; gap: 5px; }
.auto svg { width: 8px; height: 10px; fill: none; stroke: #999; }
```

FILE: grid.js
```js
// Ground grid in two-point perspective: 14 major cells each way, 5 minor cells per major.
const origin = [484, 313.3];
const vanishX = [-1170, -163];
const vanishY = [1028, -163];
const stepX = -0.0213;
const stepY = 0.03665;
const half = 14;

function project(x, y) {
  const a = stepX * x, b = stepY * y, w = 1 + a + b;
  return [0, 1].map(i => ((origin[i] + a * vanishX[i] + b * vanishY[i]) / w).toFixed(1)).join(" ");
}

const paths = { minor: "", major: "" };
for (let i = -half * 5; i <= half * 5; i++) {
  const k = i / 5;
  const kind = i % 5 ? "minor" : "major";
  paths[kind] += `M${project(k, -half)}L${project(k, half)}M${project(-half, k)}L${project(half, k)}`;
}
for (const kind in paths) {
  const path = document.createElementNS("http://www.w3.org/2000/svg", "path");
  path.setAttribute("d", paths[kind]);
  document.getElementById(kind).append(path);
}
```
